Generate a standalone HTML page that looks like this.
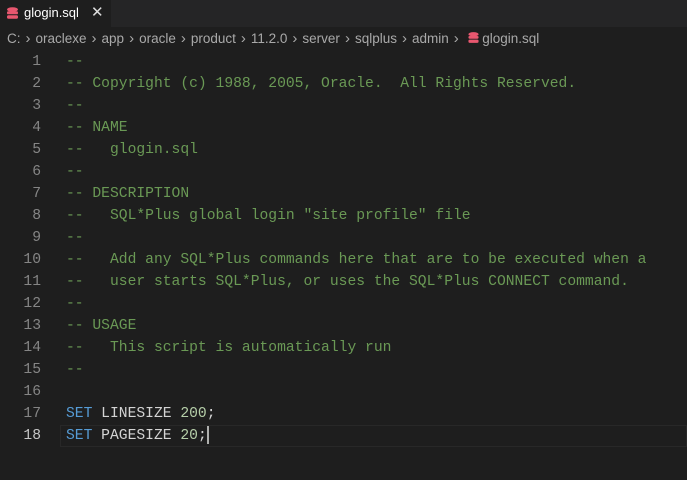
<!DOCTYPE html>
<html><head><style>
body{margin:0;width:687px;height:480px;background:#1e1e1e;overflow:hidden;font-family:"Liberation Sans",sans-serif}
.tabs{height:27px;background:#252526;position:relative}
.tab{position:absolute;left:0;top:0;width:111px;height:27px;background:#1e1e1e;color:#fff;font-size:13px}
.tab .t{position:absolute;left:24px;top:5px}
.tab .x{position:absolute;left:91px;top:3px;font-size:15px;color:#ddd}
.bc{height:24px;color:#a9a9a9;font-size:13.5px;line-height:24px;padding-left:7px;white-space:pre}
.s{display:inline-block;width:15px;text-align:center;font-size:15px}
.code{position:absolute;top:51px;left:0;right:0;font-family:"Liberation Mono",monospace;font-size:14.67px}
.l{height:22px;line-height:22px;position:relative;white-space:pre}
.n{position:absolute;left:0;width:41px;text-align:right;color:#858585}
.c{position:absolute;left:66px;color:#6a9955}
.k{color:#569cd6}.num{color:#b5cea8}.p{color:#d4d4d4}
.cur{position:absolute;left:60px;right:0;top:0;height:20px;border:1px solid #282828}
</style></head><body>
<div class="tabs"><div class="tab">
<svg style="position:absolute;left:7px;top:7px" width="11" height="13" viewBox="0 0 11 13"><g fill="#e8576f"><ellipse cx="5.5" cy="2.5" rx="5.5" ry="2.3"/><rect x="0" y="4.3" width="11" height="3" rx="1.3"/><rect x="0" y="8.3" width="11" height="3.5" rx="1.5"/></g></svg>
<span class="t">glogin.sql</span><span class="x">✕</span></div></div>
<div class="bc">C:<span class="s">›</span>oraclexe<span class="s">›</span>app<span class="s">›</span>oracle<span class="s">›</span>product<span class="s">›</span>11.2.0<span class="s">›</span>server<span class="s">›</span>sqlplus<span class="s">›</span>admin<span class="s">›</span> <svg width="11" height="12" viewBox="0 0 11 13" style="vertical-align:-1px"><g fill="#e8576f"><ellipse cx="5.5" cy="2.5" rx="5.5" ry="2.3"/><rect x="0" y="4.3" width="11" height="3" rx="1.3"/><rect x="0" y="8.3" width="11" height="3.5" rx="1.5"/></g></svg> glogin.sql</div>
<div class="code">
<div class="l"><span class="n">1</span><span class="c">--</span></div>
<div class="l"><span class="n">2</span><span class="c">-- Copyright (c) 1988, 2005, Oracle.  All Rights Reserved.</span></div>
<div class="l"><span class="n">3</span><span class="c">--</span></div>
<div class="l"><span class="n">4</span><span class="c">-- NAME</span></div>
<div class="l"><span class="n">5</span><span class="c">--   glogin.sql</span></div>
<div class="l"><span class="n">6</span><span class="c">--</span></div>
<div class="l"><span class="n">7</span><span class="c">-- DESCRIPTION</span></div>
<div class="l"><span class="n">8</span><span class="c">--   SQL*Plus global login "site profile" file</span></div>
<div class="l"><span class="n">9</span><span class="c">--</span></div>
<div class="l"><span class="n">10</span><span class="c">--   Add any SQL*Plus commands here that are to be executed when a</span></div>
<div class="l"><span class="n">11</span><span class="c">--   user starts SQL*Plus, or uses the SQL*Plus CONNECT command.</span></div>
<div class="l"><span class="n">12</span><span class="c">--</span></div>
<div class="l"><span class="n">13</span><span class="c">-- USAGE</span></div>
<div class="l"><span class="n">14</span><span class="c">--   This script is automatically run</span></div>
<div class="l"><span class="n">15</span><span class="c">--</span></div>
<div class="l"><span class="n">16</span></div>
<div class="l"><span class="n">17</span><span class="c"><span class="k">SET</span><span class="p"> LINESIZE </span><span class="num">200</span><span class="p">;</span></span></div>
<div class="l"><div class="cur"></div><span class="n" style="color:#c6c6c6">18</span><span class="c"><span class="k">SET</span><span class="p"> PAGESIZE </span><span class="num">20</span><span class="p">;</span><span style="display:inline-block;width:2px;height:18px;background:#aeafad;vertical-align:middle"></span></span></div>
</div>
</body></html>
